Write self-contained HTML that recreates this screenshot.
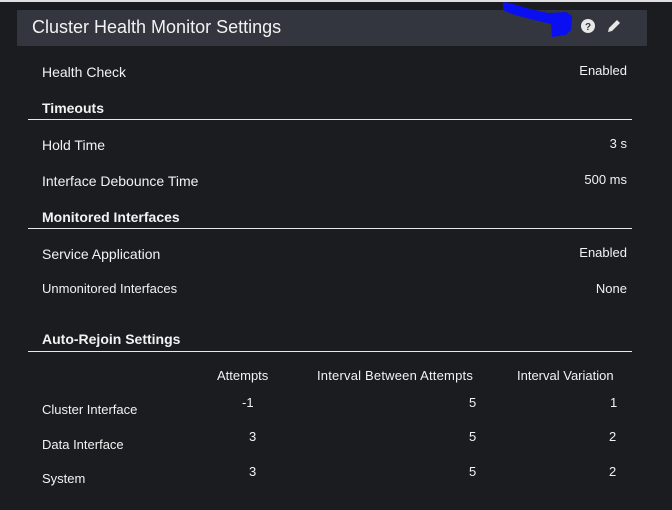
<!DOCTYPE html>
<html><head><style>
body{margin:0;width:672px;height:510px;background:#1b1c20;font-family:"Liberation Sans",sans-serif;color:#f2f2f2;position:relative;overflow:hidden}
.a{position:absolute;white-space:nowrap}
.hdr{position:absolute;left:17px;top:10px;width:630px;height:36px;background:#33363e}
.l{font-size:14px}
.r{font-size:13px;text-align:right}
.b{font-size:14px;font-weight:bold}
.hr{position:absolute;left:28px;width:604px;height:1px;background:#e8e8e8}
.s{font-size:13px}
</style></head><body>
<div style="position:absolute;left:0;top:0;width:672px;height:2px;background:#e0e0e0"></div>
<div class="hdr"></div>
<div class="a" style="left:32px;top:17px;font-size:18px">Cluster Health Monitor Settings</div>
<svg class="a" style="left:0;top:0" width="672" height="50"><path d="M503 2 L510 3 L530 9 L548 13 L566 12 L572 16 L571 30 L566 35 L552 37 L551 24 L530 19 L512 14 L503 10 Z" fill="#0a0ff2"/></svg>
<svg class="a" style="left:580px;top:18px" width="44" height="16"><circle cx="8" cy="8" r="7" fill="#e8e8e8"/><text x="8" y="12" font-size="10" font-weight="bold" text-anchor="middle" fill="#33363e" font-family="Liberation Sans">?</text><path d="M28 14 L29 10 L37 2 L40 5 L32 13 Z" fill="#e8e8e8"/></svg>
<div class="a l" style="left:42px;top:64px">Health Check</div><div class="a r" style="right:45px;top:63px">Enabled</div>
<div class="a b" style="left:42px;top:100px">Timeouts</div><div class="hr" style="top:119px"></div>
<div class="a l" style="left:42px;top:137px">Hold Time</div><div class="a r" style="right:45px;top:136px">3 s</div>
<div class="a l" style="left:42px;top:173px">Interface Debounce Time</div><div class="a r" style="right:45px;top:172px">500 ms</div>
<div class="a b" style="left:42px;top:209px">Monitored Interfaces</div><div class="hr" style="top:228px"></div>
<div class="a l" style="left:42px;top:246px">Service Application</div><div class="a r" style="right:45px;top:245px">Enabled</div>
<div class="a s" style="left:42px;top:281px">Unmonitored Interfaces</div><div class="a r" style="right:45px;top:281px">None</div>
<div class="a b" style="left:42px;top:331px">Auto-Rejoin Settings</div><div class="hr" style="top:351px"></div>
<div class="a s" style="left:217px;top:368px">Attempts</div>
<div class="a s" style="left:317px;top:368px;letter-spacing:0.2px">Interval Between Attempts</div>
<div class="a s" style="left:517px;top:368px">Interval Variation</div>
<div class="a s" style="left:42px;top:402px">Cluster Interface</div>
<div class="a s" style="left:42px;top:437px">Data Interface</div>
<div class="a s" style="left:42px;top:471px">System</div>
<div class="a s" style="left:242px;top:395px">-1</div><div class="a s" style="left:469px;top:395px">5</div><div class="a s" style="left:610px;top:395px">1</div>
<div class="a s" style="left:249px;top:429px">3</div><div class="a s" style="left:469px;top:429px">5</div><div class="a s" style="left:609px;top:429px">2</div>
<div class="a s" style="left:249px;top:464px">3</div><div class="a s" style="left:469px;top:464px">5</div><div class="a s" style="left:609px;top:464px">2</div>
</body></html>
